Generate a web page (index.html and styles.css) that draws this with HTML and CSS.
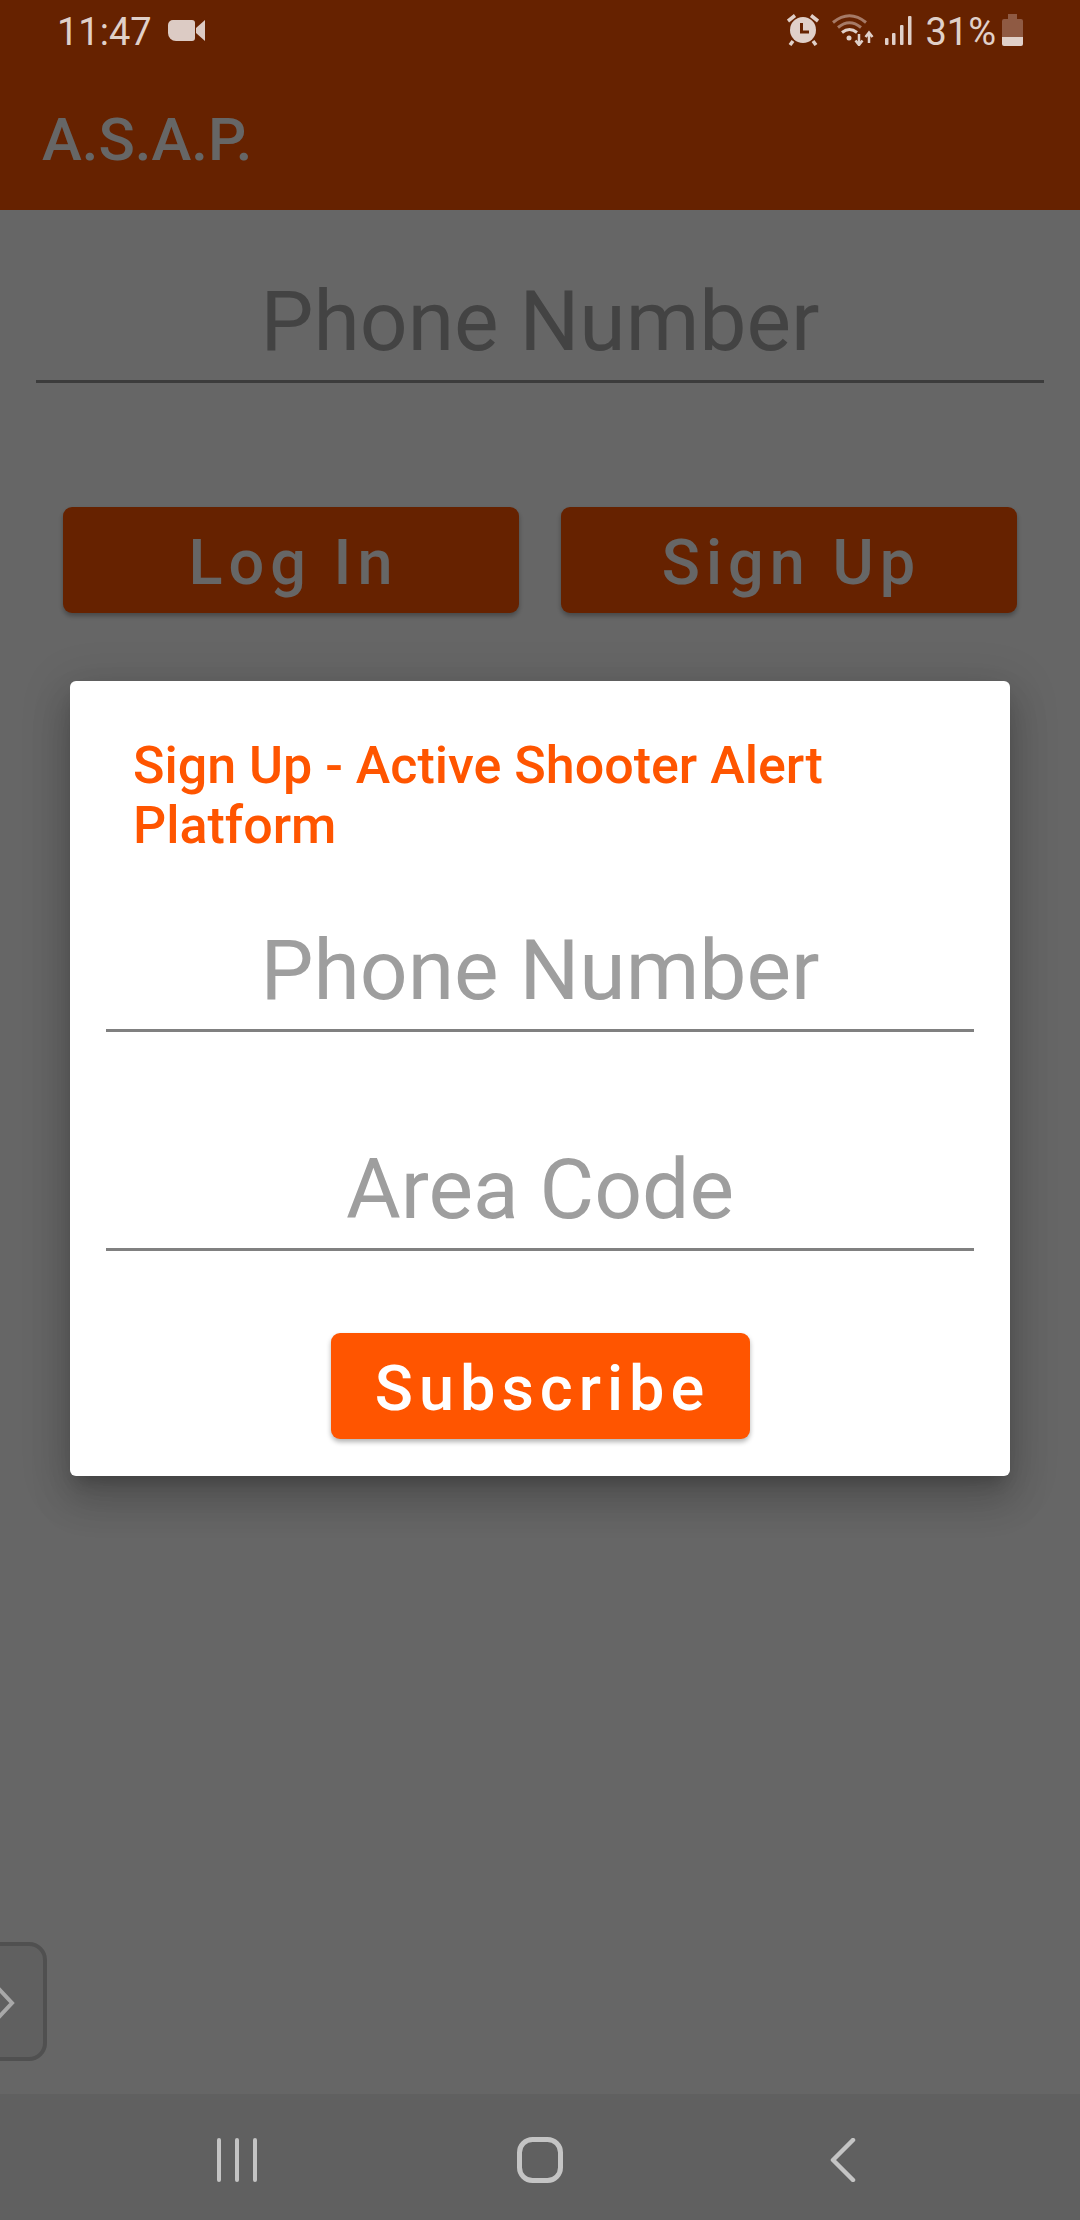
FILE: index.html
```html
<!DOCTYPE html>
<html lang="en">
<head>
<meta charset="utf-8">
<title>A.S.A.P.</title>
<link rel="stylesheet" href="styles.css">
</head>
<body>
<div class="screen">
  <header class="appbar">
    <div class="appbar-title">A.S.A.P.</div>
  </header>
  <main class="content">
    <div class="field field-main"><span class="field-text">Phone Number</span></div>
    <div class="actions">
      <button class="btn">Log In</button>
      <button class="btn">Sign Up</button>
    </div>
  </main>
  <div class="scrim"></div>
  <div class="side-tab">
    <svg class="side-chevron" viewBox="0 0 16 40" width="16" height="40"><path d="M-3 3 L12 19 L-3 35" fill="none" stroke="#a8a8a8" stroke-width="4"/></svg>
  </div>
  <div class="statusbar">
    <div class="status-left">
      <span class="status-time">11:47</span>
      <svg class="ic-video" viewBox="0 0 37 21" width="37" height="21"><path d="M5 0H24a3 3 0 0 1 3 3V18a3 3 0 0 1-3 3H8a8 8 0 0 1-8-8V5a5 5 0 0 1 5-5Z" fill="#dccbc4"/><path d="M28 8L37 0V21L28 13Z" fill="#dccbc4"/></svg>
    </div>
    <div class="status-right">
      <svg class="ic-alarm" viewBox="0 0 32 32" width="32" height="32">
        <circle cx="16" cy="16" r="13" fill="#e0d0c9"/>
        <path d="M1 7L8 1.500M31 7L24 1.500M6 27L3 31M26 27L29 31" stroke="#e0d0c9" stroke-width="3.500" fill="none"/>
        <path d="M14.500 9V18H22" stroke="#662200" stroke-width="3" fill="none"/>
      </svg>
      <svg class="ic-wifi" viewBox="0 0 42 32" width="42" height="32">
        <path d="M1 8.500Q17.500 -5 34 8.500" stroke="#a67a66" stroke-width="3" fill="none"/>
        <path d="M6 13.500Q17.500 4 29 13.500" stroke="#a67a66" stroke-width="3" fill="none"/>
        <path d="M10 18.500Q17.500 12.500 25 18.500" stroke="#e0d0c9" stroke-width="3" fill="none"/>
        <circle cx="17" cy="24" r="2.500" fill="#e0d0c9"/>
        <path d="M27 20V30M23.500 26.500L27 31L30.500 26.500" stroke="#e0d0c9" stroke-width="2.500" fill="none"/>
        <path d="M37 29V19M33.500 23L37 18.500L40.500 23" stroke="#e0d0c9" stroke-width="2.500" fill="none"/>
      </svg>
      <svg class="ic-signal" viewBox="0 0 27 29" width="27" height="29">
        <rect x="0" y="22" width="3.500" height="7" rx="1" fill="#e0d0c9"/>
        <rect x="7" y="17" width="3.500" height="12" rx="1" fill="#e0d0c9"/>
        <rect x="15" y="9" width="3.500" height="20" rx="1" fill="#e0d0c9"/>
        <rect x="23" y="0" width="3.500" height="29" rx="1" fill="#e0d0c9"/>
      </svg>
      <span class="status-pct">31%</span>
      <svg class="ic-battery" viewBox="0 0 21 32" width="21" height="32">
        <path d="M6 0H15V5H19a2 2 0 0 1 2 2V23H0V7a2 2 0 0 1 2-2H6Z" fill="#8f5a43"/>
        <path d="M0 23H21V30a2 2 0 0 1-2 2H2a2 2 0 0 1-2-2Z" fill="#e0d0c9"/>
      </svg>
    </div>
  </div>
  <section class="dialog">
    <h2 class="dialog-title">Sign Up - Active Shooter Alert Platform</h2>
    <div class="field field-dialog"><span class="field-text">Phone Number</span></div>
    <div class="field field-dialog field-second"><span class="field-text">Area Code</span></div>
    <button class="btn btn-primary">Subscribe</button>
  </section>
  <nav class="navbar">
    <svg class="nav-recent" viewBox="0 0 40 44" width="40" height="44"><path d="M2 2V42M20 2V42M38 2V42" stroke="#c4c4c4" stroke-width="4" stroke-linecap="round" fill="none"/></svg>
    <svg class="nav-home" viewBox="0 0 46 46" width="46" height="46"><rect x="2.500" y="2.500" width="41" height="41" rx="13" fill="none" stroke="#c4c4c4" stroke-width="5"/></svg>
    <svg class="nav-back" viewBox="0 0 26 44" width="26" height="44"><path d="M23 2L3 22L23 42" stroke="#c4c4c4" stroke-width="4.500" stroke-linecap="round" stroke-linejoin="round" fill="none"/></svg>
  </nav>
</div>
</body>
</html>
```
FILE: styles.css
```css
* { box-sizing: border-box; }
html, body { margin: 0; padding: 0; }
body { font-family: Roboto, "Liberation Sans", sans-serif; background: #fff; }
.screen { position: relative; width: 1080px; height: 2220px; overflow: hidden; display: flex; flex-direction: column; background: #fff; }

.appbar { height: 210px; flex: none; background: #ff5500; display: flex; align-items: flex-end; padding: 0 42px 40px; }
.appbar-title { color: #fff; font-size: 60px; font-weight: 500; line-height: 60px; }

.content { flex: 1; padding: 53px 36px 0; }
.field { border-bottom: 3px solid #808080; text-align: center; }
.field-main { border-bottom-color: #969696; }
.field-main .field-text { color: #a8a8a8; }
.field-text { display: block; font-size: 84px; line-height: 117px; color: #9e9e9e; }

.actions { display: flex; gap: 42px; padding: 124px 27px 0; }
.btn { flex: 1; height: 106px; border: 0; border-radius: 9px; background: #ff5500; color: #fff; font-family: inherit; font-size: 63px; font-weight: 500; letter-spacing: 6px; box-shadow: 0 3px 5px rgba(0,0,0,.3); padding: 5px 0 0 5px; }

.scrim { position: absolute; inset: 0; background: rgba(0,0,0,.6); }

.side-tab { position: absolute; left: -60px; top: 1942px; width: 107px; height: 119px; border: 4px solid #505050; border-radius: 18px; background: #606060; }
.side-chevron { position: absolute; left: 56px; top: 38px; }

.statusbar { position: absolute; top: 0; left: 0; right: 0; height: 60px; display: flex; justify-content: space-between; align-items: center; padding: 0 57px; color: #e0d0c9; }
.status-left, .status-right { display: flex; align-items: center; }
.status-time, .status-pct { font-size: 38px; padding-top: 4px; }
.ic-video { margin-left: 16px; }
.ic-wifi { margin-left: 13px; }
.ic-signal { margin-left: 11px; }
.status-pct { margin-left: 13px; }
.ic-battery { margin-left: 6px; }

.dialog { position: absolute; left: 70px; top: 681px; width: 940px; height: 795px; background: #fff; border-radius: 6px; padding: 55px 36px 0; display: flex; flex-direction: column; box-shadow: 0 24px 38px 3px rgba(0,0,0,.14), 0 9px 46px 8px rgba(0,0,0,.12), 0 11px 15px -7px rgba(0,0,0,.2); }
.dialog-title { margin: 0; padding: 0 27px; color: #ff5500; font-size: 52px; font-weight: 500; line-height: 60px; }
.field-dialog { margin-top: 56px; }
.field-second { margin-top: 99px; }
.btn-primary { flex: none; align-self: center; width: 419px; margin-top: 82px; }

.navbar { position: absolute; left: 0; right: 0; bottom: 0; height: 126px; background: #606060; display: flex; align-items: center; padding: 6px 0 0 217px; }
.nav-home { margin-left: 260px; }
.nav-back { margin-left: 267px; }
```
